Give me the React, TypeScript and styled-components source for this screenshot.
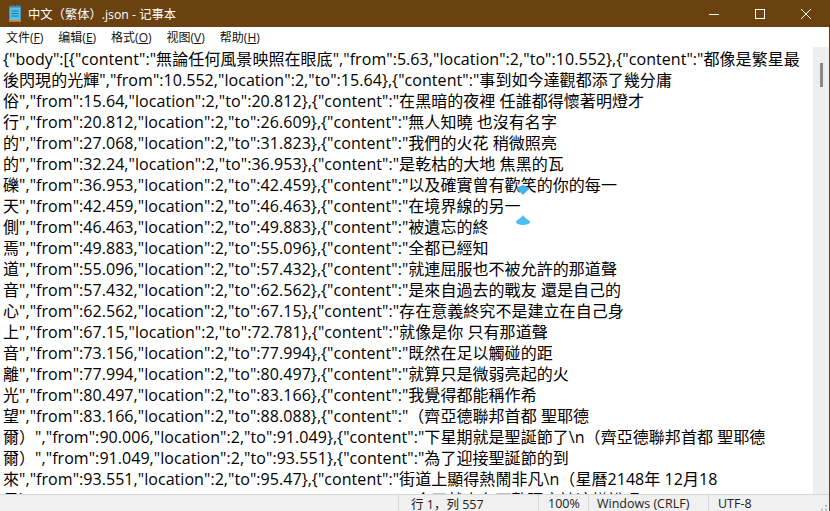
import React from "react";
import styled, { createGlobalStyle } from "styled-components";

const LINES = [
  `{"body":[{"content":"無論任何風景映照在眼底","from":5.63,"location":2,"to":10.552},{"content":"都像是繁星最`,
  `後閃現的光輝","from":10.552,"location":2,"to":15.64},{"content":"事到如今達觀都添了幾分庸`,
  `俗","from":15.64,"location":2,"to":20.812},{"content":"在黑暗的夜裡 任誰都得懷著明燈才`,
  `行","from":20.812,"location":2,"to":26.609},{"content":"無人知曉 也沒有名字`,
  `的","from":27.068,"location":2,"to":31.823},{"content":"我們的火花 稍微照亮`,
  `的","from":32.24,"location":2,"to":36.953},{"content":"是乾枯的大地 焦黑的瓦`,
  `礫","from":36.953,"location":2,"to":42.459},{"content":"以及確實曾有歡笑的你的每一`,
  `天","from":42.459,"location":2,"to":46.463},{"content":"在境界線的另一`,
  `側","from":46.463,"location":2,"to":49.883},{"content":"被遺忘的終`,
  `焉","from":49.883,"location":2,"to":55.096},{"content":"全都已經知`,
  `道","from":55.096,"location":2,"to":57.432},{"content":"就連屈服也不被允許的那道聲`,
  `音","from":57.432,"location":2,"to":62.562},{"content":"是來自過去的戰友 還是自己的`,
  `心","from":62.562,"location":2,"to":67.15},{"content":"存在意義終究不是建立在自己身`,
  `上","from":67.15,"location":2,"to":72.781},{"content":"就像是你 只有那道聲`,
  `音","from":73.156,"location":2,"to":77.994},{"content":"既然在足以觸碰的距`,
  `離","from":77.994,"location":2,"to":80.497},{"content":"就算只是微弱亮起的火`,
  `光","from":80.497,"location":2,"to":83.166},{"content":"我覺得都能稱作希`,
  `望","from":83.166,"location":2,"to":88.088},{"content":"（齊亞德聯邦首都 聖耶德`,
  `爾）","from":90.006,"location":2,"to":91.049},{"content":"下星期就是聖誕節了\\n（齊亞德聯邦首都 聖耶德`,
  `爾）","from":91.049,"location":2,"to":93.551},{"content":"為了迎接聖誕節的到`,
  `來","from":93.551,"location":2,"to":95.47},{"content":"街道上顯得熱鬧非凡\\n（星曆2148年 12月18`,
  `日）","from":95.47,"location":2,"to":97.722},{"content":"今天就由在下整理應該這樣說吧`,
];

const MENU = [
  { label: "文件", key: "F" },
  { label: "编辑", key: "E" },
  { label: "格式", key: "O" },
  { label: "视图", key: "V" },
  { label: "帮助", key: "H" },
];

const GlobalStyle = createGlobalStyle`
  html, body {
    margin: 0;
    padding: 0;
    background: #fff;
  }
`;

const Window = styled.div`
  position: relative;
  width: 830px;
  height: 511px;
  box-sizing: border-box;
  display: flex;
  flex-direction: column;
  overflow: hidden;
  border-right: 1px solid #6b4110;
  font-family: "Open Sans", "Noto Sans CJK SC", sans-serif;
  background: #fff;
`;

const TitleBar = styled.div`
  height: 27px;
  flex: none;
  display: flex;
  align-items: center;
  background: #6b4110;
  color: #fff;
`;

const AppIcon = styled.svg`
  width: 12px;
  height: 17px;
  margin-left: 9px;
`;

const Title = styled.div`
  margin-left: 7px;
  font-size: 12.3px;
  flex: 1;
`;

const Caption = styled.div`
  width: 46px;
  height: 27px;
  display: flex;
  align-items: center;
  justify-content: center;
`;

const MenuBar = styled.div`
  height: 20px;
  flex: none;
  display: flex;
  align-items: center;
  padding-left: 6px;
  gap: 15px;
  font-size: 12px;
  color: #111;
`;

const MenuItem = styled.span`
  u {
    text-underline-offset: 1px;
  }
`;

const Editor = styled.div`
  flex: 1;
  display: flex;
  min-height: 0;
`;

const TextArea = styled.div`
  flex: 1;
  overflow: hidden;
  padding: 2px 0 0 3px;
  font-size: 16px;
  line-height: 21px;
  letter-spacing: 0.05px;
  color: #000;
`;

const Line = styled.div`
  white-space: pre;
`;

const ScrollBar = styled.div`
  width: 16px;
  flex: none;
  display: flex;
  justify-content: center;
  background: #eeeeee;
`;

const ScrollThumb = styled.div`
  width: 3px;
  height: 24px;
  margin-top: 16px;
  background: #8a8a8a;
`;

const StatusBar = styled.div`
  height: 17px;
  flex: none;
  box-sizing: border-box;
  display: flex;
  background: #f0f0f0;
  border-top: 1px solid #d7d7d7;
  font-size: 12.5px;
  color: #222;
`;

const StatusFill = styled.div`
  flex: 1;
`;

const StatusCell = styled.div<{ $width: number; $pad: number }>`
  width: ${(p) => p.$width}px;
  border-left: 1px solid #d7d7d7;
  padding-left: ${(p) => p.$pad}px;
  box-sizing: border-box;
  display: flex;
  align-items: center;
  white-space: nowrap;
`;

const Grip = styled.svg`
  position: absolute;
  right: 1px;
  bottom: 0;
  width: 7px;
  height: 6px;
`;

// the mouse pointer trail sits over the text
const Pointer = styled.svg<{ $top: number }>`
  position: absolute;
  left: 516px;
  top: ${(p) => p.$top}px;
  width: 14px;
  height: 10px;
`;

const App = () => {
  return (
    <Window>
      <GlobalStyle />
      <TitleBar>
        <AppIcon viewBox="0 0 12 17">
          <rect x=".5" y="2" width="11" height="13.5" fill="#58c0ea" stroke="#3b9cc9" />
          <path d="M2.5 6h7M2.5 8.5h7M2.5 11h7" stroke="#1e6f9a" />
          <path d="M0 16h12" stroke="#e8892f" strokeWidth="1.5" />
          <path d="M2.5 0v3M5 0v3M7.5 0v3M10 0v3" stroke="#3b9cc9" />
        </AppIcon>
        <Title>中文（繁体）.json - 记事本</Title>
        <Caption>
          <svg width="10" height="10" viewBox="0 0 10 10"><path d="M0 5.5h10" stroke="#fff" /></svg>
        </Caption>
        <Caption>
          <svg width="10" height="10" viewBox="0 0 10 10"><rect x=".5" y=".5" width="9" height="9" fill="none" stroke="#fff" /></svg>
        </Caption>
        <Caption>
          <svg width="10" height="10" viewBox="0 0 10 10"><path d="M0 0l10 10M10 0L0 10" stroke="#fff" /></svg>
        </Caption>
      </TitleBar>
      <MenuBar>
        {MENU.map((m) => (
          <MenuItem key={m.key}>
            {m.label}(<u>{m.key}</u>)
          </MenuItem>
        ))}
      </MenuBar>
      <Editor>
        <TextArea>
          {LINES.map((l, i) => (
            <Line key={i}>{l}</Line>
          ))}
        </TextArea>
        <ScrollBar>
          <ScrollThumb />
        </ScrollBar>
      </Editor>
      <StatusBar>
        <StatusFill />
        <StatusCell $width={140} $pad={12}>行 1，列 557</StatusCell>
        <StatusCell $width={50} $pad={9}>100%</StatusCell>
        <StatusCell $width={120} $pad={8}>Windows (CRLF)</StatusCell>
        <StatusCell $width={121} $pad={9}>UTF-8</StatusCell>
      </StatusBar>
      <Grip viewBox="0 0 7 6">
        <path d="M4 0h2v2H4zM0 3.5h2v2H0zM4 3.5h2v2H4z" fill="#b9b9b9" />
      </Grip>
      <Pointer $top={185} viewBox="0 0 14 10"><path d="M0 3L7 0l7 3-7 7z" fill="#45b4ee" /></Pointer>
      <Pointer $top={215} viewBox="0 0 14 10"><path d="M7 0c1 3 7 5 7 7 0 2-4 3-7 3S0 9 0 7c0-2 6-4 7-7z" fill="#4dbcf2" /></Pointer>
    </Window>
  );
};

export default App;
